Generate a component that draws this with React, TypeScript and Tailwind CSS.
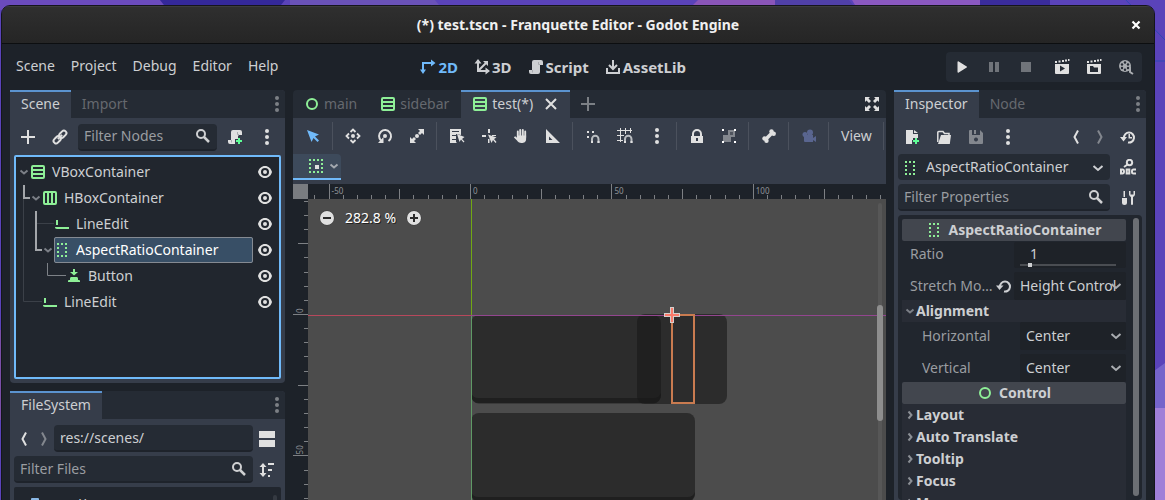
import React from "react";

const GREEN = "#8eef97";

interface IconProps {
  className?: string;
}

function Svg({ className = "", children }: { className?: string; children: React.ReactNode }) {
  return (
    <svg className={`w-4 h-4 shrink-0 ${className}`} viewBox="0 0 16 16" fill="currentColor" aria-hidden="true">
      {children}
    </svg>
  );
}

/* ---------- node icons ---------- */

function VBoxIcon() {
  return (
    <Svg>
      <path fill={GREEN} fillRule="evenodd" d="M3 1a2 2 0 0 0-2 2v10a2 2 0 0 0 2 2h10a2 2 0 0 0 2-2V3a2 2 0 0 0-2-2zm0 2h10v2H3zm0 4h10v2H3zm0 4h10v2H3z" />
    </Svg>
  );
}

function HBoxIcon() {
  return (
    <Svg>
      <path fill={GREEN} fillRule="evenodd" d="M3 1a2 2 0 0 0-2 2v10a2 2 0 0 0 2 2h10a2 2 0 0 0 2-2V3a2 2 0 0 0-2-2zm0 2h2v10H3zm4 0h2v10H7zm4 0h2v10h-2z" />
    </Svg>
  );
}

function LineEditIcon() {
  return (
    <Svg>
      <path fill={GREEN} d="M2 4v5h2V4zM1 11c0 1.200.5 2 2 2h12v-2z" />
    </Svg>
  );
}

function AspectRatioIcon() {
  return (
    <Svg>
      <path fill={GREEN} d="M3 1h2v2H3zm4 0h2v2H7zm4 0h2v2h-2zM3 5h2v2H3zm8 0h2v2h-2zM3 9h2v2H3zm8 0h2v2h-2zM3 13h2v2H3zm4 0h2v2H7zm4 0h2v2h-2z" />
    </Svg>
  );
}

function ButtonNodeIcon() {
  return (
    <Svg>
      <path fill={GREEN} d="M7 1h2v3h3L8 7.500 4 4h3zM5 9a2 2 0 0 0-1 1.500V12H3a1 1 0 0 0-1 1v1h12v-1a1 1 0 0 0-1-1h-1v-1.500A2 2 0 0 0 11 9z" />
    </Svg>
  );
}

function ControlIcon() {
  return (
    <Svg>
      <circle cx="8" cy="8" r="5" fill="none" stroke={GREEN} strokeWidth="2" />
    </Svg>
  );
}

function AnchorIcon() {
  return (
    <Svg>
      <path fill={GREEN} d="M1 1h2v2H1zm4 0h2v2H5zm4 0h2v2H9zm4 0h2v2h-2zM1 5h2v2H1zm12 0h2v2h-2zM1 9h2v2H1zm12 0h2v2h-2zM1 13h2v2H1zm4 0h2v2H5zm4 0h2v2H9zm4 0h2v2h-2z" />
      <path d="M7 7h4v4H7z" />
    </Svg>
  );
}

/* ---------- editor icons ---------- */

function ChevronDown({ className = "" }: IconProps) {
  return (
    <svg className={`w-3 h-3 shrink-0 ${className}`} viewBox="0 0 12 12" aria-hidden="true">
      <path d="m2.500 4.500 3.500 3 3.500-3" fill="none" stroke="currentColor" strokeWidth="2" />
    </svg>
  );
}

function ChevronRight({ className = "" }: IconProps) {
  return (
    <svg className={`w-3 h-3 shrink-0 ${className}`} viewBox="0 0 12 12" aria-hidden="true">
      <path d="m4.500 2.500 3 3.500-3 3.500" fill="none" stroke="currentColor" strokeWidth="2" />
    </svg>
  );
}

function SelectArrow({ className = "" }: IconProps) {
  return <Svg className={className}><path d="m3.500 6 4.500 4 4.500-4" fill="none" stroke="currentColor" strokeWidth="2" /></Svg>;
}

function PlusIcon({ className = "" }: IconProps) {
  return <Svg className={className}><path d="M7 1h2v6h6v2H9v6H7V9H1V7h6z" /></Svg>;
}

function DotsIcon({ className = "" }: IconProps) {
  return (
    <Svg className={className}>
      <circle cx="8" cy="2" r="2" />
      <circle cx="8" cy="8" r="2" />
      <circle cx="8" cy="14" r="2" />
    </Svg>
  );
}

function LinkIcon() {
  return (
    <Svg>
      <g fill="none" stroke="currentColor" strokeWidth="2" transform="rotate(-45 8 8)">
        <rect x="0" y="5.500" width="8" height="5" rx="2.500" />
        <rect x="8" y="5.500" width="8" height="5" rx="2.500" />
        <path d="M5 8h6" />
      </g>
    </Svg>
  );
}

function SearchIcon({ className = "" }: IconProps) {
  return (
    <Svg className={className}>
      <circle cx="6" cy="6" r="4" fill="none" stroke="currentColor" strokeWidth="2" />
      <path d="m9 9 5 5" stroke="currentColor" strokeWidth="2.500" />
    </Svg>
  );
}

function ScriptIcon() {
  return (
    <Svg>
      <path d="M6 1a2 2 0 0 0-2 2v8H1v2a2 2 0 0 0 2 2h7a2 2 0 0 0 2-2V6h3V3a2 2 0 0 0-2-2z" />
      <path d="M10.500 3v2.500H12M4.500 11v2.500" fill="none" stroke="#a9abaf" />
    </Svg>
  );
}

function ScriptAddIcon() {
  return (
    <Svg>
      <path d="M6 1a2 2 0 0 0-2 2v8H1v2a2 2 0 0 0 2 2h5v-5h3V7l1-1h3V3a2 2 0 0 0-2-2z" />
      <path d="M10.500 3v2.500H12M4.500 11v2.500" fill="none" stroke="#a9abaf" />
      <path fill="#5fff97" d="M11 9h2v2h2v2h-2v2h-2v-2H9v-2h2z" />
    </Svg>
  );
}

function EyeIcon() {
  return (
    <Svg className="text-[#e0e0e0]">
      <path fillRule="evenodd" d="M8 2C4.500 2 2 4.500 1 8c1 3.500 3.500 6 7 6s6-2.500 7-6c-1-3.500-3.500-6-7-6zm0 2a4 4 0 0 1 0 8 4 4 0 0 1 0-8z" />
      <circle cx="8" cy="8" r="2" />
    </Svg>
  );
}

function BackIcon({ className = "" }: IconProps) {
  return <Svg className={className}><path d="M10 1.500 6.500 8l3.500 6.500" fill="none" stroke="currentColor" strokeWidth="2" /></Svg>;
}

function ForwardIcon({ className = "" }: IconProps) {
  return <Svg className={className}><path d="M6 1.500 9.500 8 6 14.500" fill="none" stroke="currentColor" strokeWidth="2" /></Svg>;
}

function Icon2D() {
  return (
    <Svg>
      <path d="M3 12V4h8" fill="none" stroke="currentColor" strokeWidth="2" />
      <path d="m11 .5 4.500 3.500-4.500 3.500zM0 10.500h6L3 15z" />
    </Svg>
  );
}

function Icon3D() {
  return (
    <Svg>
      <path d="M4 3v9h9M4 12l8-8" fill="none" stroke="currentColor" strokeWidth="2" />
      <path d="M4 0 .5 4.500h7zM9 2h5v5zM11.500 8.500v7L16 12z" />
    </Svg>
  );
}

function AssetLibIcon() {
  return (
    <Svg>
      <path d="M2 9v5h12V9M8 1v8M4 6l4 4 4-4" fill="none" stroke="currentColor" strokeWidth="2" />
    </Svg>
  );
}

function SlateIcon({ children }: { children: React.ReactNode }) {
  return (
    <Svg>
      <path d="M1 2h2v2H1zm3.500-.5h2v2h-2zM8 1h2v2H8zm3-.5h2v2h-2zM14 0h1.500v2H14z" />
      <path d="M1 5h14v9a1 1 0 0 1-1 1H2a1 1 0 0 1-1-1z" />
      {children}
    </Svg>
  );
}

function MovieIcon() {
  return (
    <Svg>
      <circle cx="7" cy="7" r="6" />
      <path d="M12 8v5l3 2" fill="none" stroke="currentColor" strokeWidth="2" />
      <g fill="#252b34">
        <circle cx="7" cy="3.500" r="1.200" />
        <circle cx="4" cy="5.500" r="1.200" />
        <circle cx="10" cy="5.500" r="1.200" />
        <circle cx="4" cy="9" r="1.200" />
        <circle cx="10" cy="9" r="1.200" />
        <circle cx="7" cy="10.700" r="1.200" />
      </g>
    </Svg>
  );
}

/* ---------- shared pieces ---------- */

interface ToolButtonProps {
  label: string;
  tone?: string;
  className?: string;
  children: React.ReactNode;
}

function ToolButton({ label, tone = "text-[#e0e0e0]", className = "", children }: ToolButtonProps) {
  return (
    <button type="button" aria-label={label} title={label} className={`w-8 h-7 shrink-0 flex items-center justify-center ${tone} ${className}`}>
      {children}
    </button>
  );
}

function Separator() {
  return <span className="w-px h-7 mr-1 ml-[3px] shrink-0 bg-[#4b515d]" />;
}

function DockTabs({ tabs }: { tabs: string[] }) {
  return (
    <div className="flex h-7 bg-[#252b34] rounded-t-sm" role="tablist">
      {tabs.map((tab, idx) => (
        <button
          key={tab}
          type="button"
          role="tab"
          aria-selected={idx === 0}
          className={idx === 0 ? "px-[11px] pb-0.5 bg-[#363d4a] border-t-2 border-[#5b93cf] text-[#cdcfd2]" : "px-[11px] text-[#65696f]"}
        >
          {tab}
        </button>
      ))}
      <button type="button" aria-label="Dock options" className="ml-auto w-4 flex items-center justify-center text-[#7c8085]">
        <DotsIcon />
      </button>
    </div>
  );
}

function SearchBox({ label }: { label: string }) {
  return (
    <label className="flex flex-1 min-w-0 items-center h-[27px] px-1.5 bg-[#252b34] border-b-2 border-[#1e232b] rounded-sm">
      <input type="text" aria-label={label} placeholder={label} className="flex-1 min-w-0 bg-transparent outline-none placeholder:text-[#9a9da1]" />
      <SearchIcon className="text-[#cfd0d2]" />
    </label>
  );
}

/* ---------- scene dock ---------- */

interface TreeNode {
  name: string;
  level: number;
  icon: React.ReactNode;
  open?: boolean;
  selected?: boolean;
}

const sceneTree: TreeNode[] = [
  { name: "VBoxContainer", level: 0, icon: <VBoxIcon />, open: true },
  { name: "HBoxContainer", level: 1, icon: <HBoxIcon />, open: true },
  { name: "LineEdit", level: 2, icon: <LineEditIcon /> },
  { name: "AspectRatioContainer", level: 2, icon: <AspectRatioIcon />, open: true, selected: true },
  { name: "Button", level: 3, icon: <ButtonNodeIcon /> },
  { name: "LineEdit", level: 1, icon: <LineEditIcon /> },
];

function SceneTree() {
  return (
    <ul className="relative h-56 mx-1 p-0.5 border-2 border-[#70bafa] bg-[#21262e] rounded-xs" role="tree">
      <svg className="absolute left-0 top-0 w-16 h-40" fill="none" aria-hidden="true">
        <path d="M7.500 41v103.500H26M21 66.500h17" stroke="#3b4048" />
        <path d="M31.500 106v12.500H50" stroke="#7d8187" />
        <path d="M8 28v13h6M20 54v39h6" stroke="#a3a6aa" strokeWidth="2" />
      </svg>
      {sceneTree.map((node, idx) => (
        <li key={idx} className="relative flex items-center h-[26px]" role="treeitem" aria-selected={!!node.selected}>
          <span className="shrink-0" style={{ width: node.level * 12 }} />
          <span className="w-3 shrink-0 text-[#7b7f86]">{node.open && <ChevronDown />}</span>
          <span
            className={
              node.selected
                ? "flex flex-1 items-center gap-1.5 h-[26px] bg-[#384f66] outline outline-[#858a92] -outline-offset-1 rounded-xs text-white"
                : "flex flex-1 items-center gap-1.5 h-[26px] text-[#cdcfd2]"
            }
          >
            {node.icon}
            {node.name}
          </span>
          <button type="button" aria-label="Toggle visibility" className="mx-1">
            <EyeIcon />
          </button>
        </li>
      ))}
    </ul>
  );
}

function SceneDock() {
  return (
    <section className="bg-[#363d4a] rounded-sm pb-1">
      <DockTabs tabs={["Scene", "Import"]} />
      <div className="flex items-center h-[37px] pt-px px-0.5">
        <ToolButton label="Add Child Node"><PlusIcon /></ToolButton>
        <ToolButton label="Instantiate Scene"><LinkIcon /></ToolButton>
        <div className="flex flex-1 min-w-0 mx-0.5"><SearchBox label="Filter Nodes" /></div>
        <ToolButton label="Attach Script"><ScriptAddIcon /></ToolButton>
        <ToolButton label="More"><DotsIcon /></ToolButton>
      </div>
      <SceneTree />
    </section>
  );
}

function FileSystemDock() {
  return (
    <section className="mt-2 bg-[#363d4a] rounded-sm">
      <DockTabs tabs={["FileSystem"]} />
      <div className="flex items-center px-1 mt-1.5 text-[#e0e0e0]">
        <button type="button" aria-label="Back" className="w-5"><BackIcon className="mx-auto" /></button>
        <button type="button" aria-label="Forward" className="w-5"><ForwardIcon className="mx-auto text-[#83878e]" /></button>
        <input type="text" aria-label="Path" defaultValue="res://scenes/" className="flex-1 min-w-0 h-[27px] px-1.5 bg-[#252b34] border-b-2 border-[#1e232b] rounded-sm outline-none text-[#cdcfd2]" />
        <button type="button" aria-label="Toggle split" className="w-7 flex justify-center">
          <Svg><path d="M0 0h16v7H0zM0 9h16v7H0z" /></Svg>
        </button>
      </div>
      <div className="flex items-center px-1 mt-1 text-[#e0e0e0]">
        <SearchBox label="Filter Files" />
        <button type="button" aria-label="Sort files" className="w-7 flex justify-center">
          <Svg>
            <path d="M3 3h2v10H3z" />
            <path d="M4 1 .5 5h7zM4 15 .5 11h7zM9 1h6v2H9zM9 7h4v2H9zM9 13h2v2H9z" />
          </Svg>
        </button>
      </div>
      <div className="flex mx-1 mt-1 p-1 pr-0.5 bg-[#21262e] rounded-xs">
        <div className="flex flex-1 items-center h-[26px] pl-3 gap-1.5 text-[#cdcfd2]">
          <Svg className="text-[#8ab8e6]"><path d="M2 2a1 1 0 0 0-1 1v10a1 1 0 0 0 1 1h12a1 1 0 0 0 1-1V6a1 1 0 0 0-1-1H9V3a1 1 0 0 0-1-1z" /></Svg>
          res://
        </div>
        <span className="w-1 mt-1 mr-0.5 rounded-sm bg-[#353a42]" />
      </div>
    </section>
  );
}

/* ---------- centre ---------- */

function CanvasToolbar() {
  return (
    <div className="bg-[#363d4a] h-[66px]">
      <div className="flex items-center h-9 pl-1 overflow-hidden">
        <ToolButton label="Select Mode" tone="text-[#70bafa]">
          <Svg><path d="m2 2 4.500 12 2-4 4 4 1.500-1.500-4-4 4-2z" /></Svg>
        </ToolButton>
        <Separator />
        <ToolButton label="Move Mode">
          <Svg>
            <circle cx="8" cy="8" r="2" />
            <path d="m5.500 4 2.500-2.500L10.500 4M5.500 12 8 14.500l2.500-2.500M4 5.500 1.500 8 4 10.500M12 5.500 14.500 8 12 10.500" fill="none" stroke="currentColor" strokeWidth="1.800" />
          </Svg>
        </ToolButton>
        <ToolButton label="Rotate Mode">
          <Svg>
            <path d="M4 12.500A6 6 0 1 1 11.500 13" fill="none" stroke="currentColor" strokeWidth="2" />
            <circle cx="8" cy="8" r="2" />
            <path d="M6.500 9v6H1z" />
          </Svg>
        </ToolButton>
        <ToolButton label="Scale Mode">
          <Svg>
            <circle cx="8" cy="8" r="2" />
            <path d="M9 1h6v6l-2-2-2 2-2-2 2-2zM7 15H1V9l2 2 2-2 2 2-2 2z" />
          </Svg>
        </ToolButton>
        <Separator />
        <ToolButton label="Show list of selectable nodes">
          <Svg>
            <path fillRule="evenodd" d="M1 1h11v6L7 6v8l1 1H1zm2 2v1h7V3zm0 4v1h4V7zm0 4v1h4v-1z" />
            <path d="m8 6 2.500 8 1.500-2.500 2.500 3 1-1-2.500-2.500L15.500 9z" />
          </Svg>
        </ToolButton>
        <ToolButton label="Change pivot">
          <Svg>
            <path d="M7 1h2v4H7zM1 7h4v2H1zM11 7h4v1h-4zM7 11h1.500v4H7z" />
            <path d="m7 6.500 3.500 8.500 1.500-3 2.500 3 1-1-2.500-3 2.500-1.500z" />
          </Svg>
        </ToolButton>
        <ToolButton label="Pan Mode">
          <Svg>
            <path d="M4.800 3.500v5M7.200 2v6M9.800 2v6M12.200 3.500v6" stroke="currentColor" strokeWidth="1.900" strokeLinecap="round" />
            <path d="M3.900 7.500h9.200V11c0 3-2 4-4.500 4C6 15 5 14 4 12.500L1 9.500c.3-1.200 1.500-1.200 2-.8l1 1z" />
          </Svg>
        </ToolButton>
        <ToolButton label="Ruler Mode">
          <Svg><path fillRule="evenodd" d="M1 1v14h14zm3 7.500 3.500 3.500H4z" /></Svg>
        </ToolButton>
        <Separator />
        <ToolButton label="Smart snap">
          <Svg>
            <path d="M2 3h2v2H2zM2 8h2v2H2zM7 3h2v2H7z" />
            <path d="M7 15v-4a3 3 0 0 1 6.500 0v4" fill="none" stroke="#b9bcc0" strokeWidth="2" />
            <path d="M6 13h2v2H6zM12.500 13h2v2h-2z" />
          </Svg>
        </ToolButton>
        <ToolButton label="Grid snap">
          <Svg>
            <path d="M3 0h1v14H3zM8 0h1v6H8zM13 0h1v5h-1zM0 2h15v1H0zM0 7h7v1H0zM0 12h6v1H0z" />
            <path d="M8 15v-4a3 3 0 0 1 6.500 0v4" fill="none" stroke="#b9bcc0" strokeWidth="2" />
            <path d="M7 13h2v2H7zM13.500 13h2v2h-2z" />
          </Svg>
        </ToolButton>
        <ToolButton label="Snapping options"><DotsIcon /></ToolButton>
        <Separator />
        <ToolButton label="Lock">
          <Svg>
            <path fillRule="evenodd" d="M2 8h12v7H2zm5 2v3h2v-3z" />
            <path d="M4 8V6a4 4 0 0 1 8 0v2" fill="none" stroke="currentColor" strokeWidth="2" />
          </Svg>
        </ToolButton>
        <ToolButton label="Group">
          <Svg>
            <path d="M7 2h7v7h-4v5H2V7h5z" fill="#83878e" />
            <path d="M9 4h3v3H9z" fill="#50555f" />
            <path d="M1 1h2v2H1zM13 1h2v2h-2zM1 13h2v2H1zM13 13h2v2h-2z" fill="#fff" />
          </Svg>
        </ToolButton>
        <Separator />
        <ToolButton label="Skeleton options">
          <Svg>
            <path d="M5 11 11 5" stroke="currentColor" strokeWidth="3.500" />
            <circle cx="10.500" cy="3.500" r="2.200" />
            <circle cx="12.700" cy="5.700" r="2.200" />
            <circle cx="3.500" cy="10.500" r="2.200" />
            <circle cx="5.500" cy="12.700" r="2.200" />
          </Svg>
        </ToolButton>
        <Separator />
        <ToolButton label="Override camera" tone="text-[#59658f]">
          <Svg>
            <circle cx="9" cy="4.500" r="3" />
            <circle cx="4" cy="6.500" r="2.500" />
            <path d="M3 7h9v3l3-2v6l-3-2v2H4a1 1 0 0 1-1-1z" />
          </Svg>
        </ToolButton>
        <Separator />
        <button type="button" className="px-2 text-[#cdcfd2]">View</button>
        <span className="w-px h-7 ml-[3px] shrink-0 bg-[#4b515d]" />
      </div>
      <button type="button" aria-label="Anchor preset" className="flex items-center justify-end gap-1 w-12 h-[26px] pr-px bg-[#3d4a5b] border-b-2 border-[#70bafa] rounded-tr-sm text-[#e0e0e0]">
        <AnchorIcon />
        <ChevronDown className="text-[#a3a8af]" />
      </button>
    </div>
  );
}

const UNIT = 14.14;
const ORIGIN = { x: 178, y: 131 };

function Canvas2D() {
  const ticksX = Array.from({ length: 42 }, (_, i) => i - 11);
  const ticksY = Array.from({ length: 22 }, (_, i) => i - 8);
  const len = (n: number) => (n % 10 === 0 ? 15 : n % 5 === 0 ? 10 : 4);

  return (
    <div className="relative flex-1 min-h-0 bg-[#1d2229] overflow-hidden">
      <svg className="block w-full h-full" shapeRendering="crispEdges">
        <rect x="15" y="15" width="100%" height="100%" fill="#4c4c4c" />
        <g shapeRendering="auto">
          <rect x="178" y="131" width="190" height="88" rx="8" fill="#191919" fillOpacity=".61" />
          <path d="M178 209a8 8 0 0 0 8 5h174a8 8 0 0 0 8-5v2a8 8 0 0 1-8 8.500H186a8 8 0 0 1-8-8.500z" fill="#191919" fillOpacity=".7" />
          <rect x="344" y="130" width="90" height="90" rx="8" fill="#191919" fillOpacity=".61" />
          <rect x="178" y="229" width="224" height="88" rx="8" fill="#191919" fillOpacity=".61" />
          <path d="M178 308a8 8 0 0 0 8 5h208a8 8 0 0 0 8-5v2a8 8 0 0 1-8 8H186a8 8 0 0 1-8-8z" fill="#191919" fillOpacity=".7" />
        </g>
        <path d="M15 131.500h163" stroke="#b7485c" />
        <path d="M178 131.500h2000" stroke="#93468f" />
        <path d="M178.500 15v116" stroke="#71a813" />
        <path d="M178.500 132v2000" stroke="#5f9966" />
        <rect x="379" y="131" width="22" height="88" fill="none" stroke="#c97b50" strokeWidth="2" />
        <path d="M377 123h4v6h6v4h-6v6h-4v-6h-6v-4h6z" fill="#d5cfcc" />
        <path d="M378 124h2v14h-2zM372 130h14v2h-14z" fill="#fa7b6b" />
        <rect width="15" height="15" fill="#797c80" />
        <g stroke="#7d8084">
          {ticksX.map((n) => {
            const x = Math.floor(177.500 + n * UNIT) + 0.5;
            return x > 15 && <path key={n} d={`M${x} ${15 - len(n)}V15`} />;
          })}
          {ticksY.map((n) => {
            const y = Math.floor(130.500 + n * UNIT) + 0.5;
            return y > 15 && <path key={n} d={`M${15 - len(n)} ${y}H15`} />;
          })}
        </g>
        <g fill="#909398" fontSize="8" shapeRendering="auto">
          {[-50, 0, 50, 100].map((v) => (
            <text key={v} x={ORIGIN.x + 2 + (v / 5) * UNIT} y="10">{v}</text>
          ))}
          {[0, 50].map((v) => (
            <text key={v} transform={`translate(10 ${ORIGIN.y - 2 + (v / 5) * UNIT}) rotate(-90)`}>{v}</text>
          ))}
        </g>
      </svg>

      <div className="absolute left-[26px] top-[25px] flex items-center gap-2.5 leading-[18px] text-white">
        <button type="button" aria-label="Zoom out">
          <Svg className="text-[#e0e0e0]">
            <circle cx="8" cy="8" r="7.500" fill="#3a3a3a" />
            <circle cx="8" cy="8" r="7" />
            <path d="M4 7h8v2H4z" fill="#2b2b2b" />
          </Svg>
        </button>
        <button type="button" className="[text-shadow:1px_1px_0_#222]">282.8 %</button>
        <button type="button" aria-label="Zoom in">
          <Svg className="text-[#e0e0e0]">
            <circle cx="8" cy="8" r="7.500" fill="#3a3a3a" />
            <circle cx="8" cy="8" r="7" />
            <path d="M4 7h3V4h2v3h3v2H9v3H7V9H4z" fill="#2b2b2b" />
          </Svg>
        </button>
      </div>

      <div className="absolute right-[3px] top-[19px] bottom-0 w-1.5">
        <div className="mx-px h-full bg-[#575757] rounded-t-sm" />
        <div className="absolute left-0 top-[102px] w-1.5 h-[116px] rounded-sm bg-[#8e8e8e]" />
      </div>
    </div>
  );
}

function Workspace() {
  return (
    <main className="flex flex-col flex-1 min-w-0">
      <div className="flex h-7 shrink-0 bg-[#252b34] rounded-t-sm" role="tablist">
        <button type="button" role="tab" className="flex items-center gap-1 pl-[11px] pr-3 text-[#65696f]"><ControlIcon />main</button>
        <button type="button" role="tab" className="flex items-center gap-1 pl-[11px] pr-3 text-[#65696f]"><VBoxIcon />sidebar</button>
        <div className="flex items-center px-[11px] pb-0.5 bg-[#363d4a] border-t-2 border-[#5b93cf]">
          <button type="button" role="tab" aria-selected="true" className="flex items-center gap-1 text-[#cdcfd2]"><VBoxIcon />test(*)</button>
          <button type="button" aria-label="Close tab" className="ml-2.5 text-[#e0e0e0]">
            <Svg><path d="m3 3 10 10M13 3 3 13" stroke="currentColor" strokeWidth="2" /></Svg>
          </button>
        </div>
        <button type="button" aria-label="New scene" className="ml-2.5 text-[#7c8085]"><PlusIcon /></button>
        <button type="button" aria-label="Distraction free" className="ml-auto mr-1.5 text-[#e0e0e0]">
          <Svg><path d="M1 1h5L4.500 2.500 7 5 5 7 2.500 4.500 1 6zM15 1h-5l1.500 1.500L9 5l2 2 2.500-2.500L15 6zM1 15h5l-1.500-1.500L7 11 5 9l-2.500 2.500L1 10zM15 15h-5l1.500-1.500L9 11l2-2 2.500 2.500L15 10z" /></Svg>
        </button>
      </div>
      <CanvasToolbar />
      <Canvas2D />
    </main>
  );
}

/* ---------- inspector ---------- */

function CategoryHeader({ icon, title }: { icon: React.ReactNode; title: string }) {
  return (
    <h3 className="flex items-center justify-center gap-1.5 h-[22px] bg-[#42464e] rounded-xs font-bold">
      {icon}
      {title}
    </h3>
  );
}

function FoldHeader({ title, open = false }: { title: string; open?: boolean }) {
  return (
    <button type="button" className="flex items-center w-full h-[22px] pl-0.5 bg-[#282c35] font-bold" aria-expanded={open}>
      {open ? <ChevronDown className="text-[#7b7f86]" /> : <ChevronRight className="text-[#8b8f95]" />}
      {title}
    </button>
  );
}

function SelectField({ id, options, className }: { id: string; options: string[]; className: string }) {
  return (
    <div className={`relative h-7 bg-[#1e2228] rounded-xs ${className}`}>
      <select id={id} className="appearance-none w-full h-7 pl-1.5 pr-2.5 bg-transparent outline-none">
        {options.map((opt) => <option key={opt}>{opt}</option>)}
      </select>
      <SelectArrow className="absolute right-0.5 top-1.5 text-[#a9acb0] pointer-events-none" />
    </div>
  );
}

const collapsedSections = ["Layout", "Auto Translate", "Tooltip", "Focus", "Mouse"];

function Inspector() {
  return (
    <aside className="flex flex-col w-[252px] shrink-0 bg-[#363d4a] rounded-t-sm">
      <DockTabs tabs={["Inspector", "Node"]} />
      <div className="flex items-center h-9 px-0.5 pt-0.5 shrink-0">
        <ToolButton label="New Resource">
          <Svg>
            <path d="M2 1h7v4h5v4H9v2H8v4H2zM10 1l4 3h-4z" />
            <path fill="#5fff97" d="M11 9h2v2h2v2h-2v2h-2v-2H9v-2h2z" />
          </Svg>
        </ToolButton>
        <ToolButton label="Load Resource">
          <Svg>
            <path d="M1.800 13V3.500a1 1 0 0 1 1-1H7l1.500 2H13V6" fill="none" stroke="currentColor" strokeWidth="1.500" />
            <path d="M5 6h10l-1.200 9H2z" />
          </Svg>
        </ToolButton>
        <ToolButton label="Save Resource" tone="text-[#83878e]">
          <Svg>
            <path fillRule="evenodd" d="M1 2a1 1 0 0 1 1-1h2v5h8V1l3 3v10a1 1 0 0 1-1 1H2a1 1 0 0 1-1-1zm7 6.500a2 2 0 1 0 .01 0zM6 1h2v4H6z" />
          </Svg>
        </ToolButton>
        <ToolButton label="Resource options"><DotsIcon /></ToolButton>
        <button type="button" aria-label="Previous object" className="ml-auto w-6 text-[#e0e0e0]"><BackIcon className="mx-auto" /></button>
        <button type="button" aria-label="Next object" className="w-6"><ForwardIcon className="mx-auto text-[#83878e]" /></button>
        <ToolButton label="History">
          <Svg>
            <path d="M4 9a5 5 0 1 1 4 4.500" fill="none" stroke="currentColor" strokeWidth="2" />
            <path d="M0 8h7l-3.500 4.500zM8.500 5H10v3h2v1.500H8.500z" />
          </Svg>
        </ToolButton>
      </div>
      <div className="flex items-center pl-1 shrink-0">
        <div className="relative flex-1 bg-[#252b34] rounded-sm">
          <span className="absolute left-1 top-1.5"><AspectRatioIcon /></span>
          <select aria-label="Edited object" className="appearance-none w-full h-[26px] pl-7 bg-transparent outline-none">
            <option>AspectRatioContainer</option>
          </select>
          <SelectArrow className="absolute right-1 top-1.5 text-[#cdcfd2] pointer-events-none" />
        </div>
        <button type="button" aria-label="Open documentation" className="w-9 flex justify-center text-[#e0e0e0]">
          <Svg>
            <circle cx="9.500" cy="3.500" r="2.700" fill="none" stroke="currentColor" strokeWidth="2" />
            <path d="m7.500 5.500-3.500 2.500" stroke="currentColor" strokeWidth="2" />
            <path d="M1 10.500h1.300c1.300 0 1.700.9 1.700 2s-.4 2-1.700 2H1zM6.700 10.500h2.600v4H6.700zM16 10.500h-2.500a1.500 1.500 0 0 0-1.500 1.500v1a1.500 1.500 0 0 0 1.500 1.500H16" fill="none" stroke="currentColor" strokeWidth="2" />
          </Svg>
        </button>
      </div>
      <div className="flex items-center pl-1 mt-1 shrink-0">
        <SearchBox label="Filter Properties" />
        <button type="button" aria-label="Manage properties" className="w-9 flex justify-center text-[#e0e0e0]">
          <Svg>
            <path d="M3.500 1h1.500v6H3.500zM2 8h5v4.500a2.500 2.500 0 0 1-5 0z" />
            <path d="M9 1v3.500a3 3 0 0 0 2 2.500V14a1 1 0 0 0 2 0V7a3 3 0 0 0 2-2.500V1h-1.500v3.500h-3V1z" />
          </Svg>
        </button>
      </div>

      <div className="flex flex-1 min-h-0 mt-1 mx-1 p-1 pr-[3px] bg-[#21262e] rounded-sm overflow-hidden">
        <div className="flex-1 min-w-0">
          <CategoryHeader icon={<AspectRatioIcon />} title="AspectRatioContainer" />
          <div className="flex mt-px">
            <label htmlFor="ratio" className="w-28 pl-2 leading-6 text-[#9a9da1]">Ratio</label>
            <div className="flex-1 h-[26px] pl-1.5 pr-2.5 bg-[#1e2228] rounded-xs">
              <input id="ratio" type="text" defaultValue="1" className="block w-full h-[21px] pt-0.5 pl-2.5 bg-transparent outline-none" />
              <input
                type="range"
                aria-label="Ratio slider"
                defaultValue={9}
                className="block w-full h-1 appearance-none bg-transparent [&::-webkit-slider-runnable-track]:h-0.5 [&::-webkit-slider-runnable-track]:bg-[#4a4d52] [&::-webkit-slider-thumb]:appearance-none [&::-webkit-slider-thumb]:size-1 [&::-webkit-slider-thumb]:-mt-px [&::-webkit-slider-thumb]:bg-[#cdcfd2]"
              />
            </div>
          </div>
          <div className="flex items-center mt-1">
            <label htmlFor="stretch" className="w-[92px] pl-2 truncate text-[#9a9da1]">Stretch Mode</label>
            <button type="button" aria-label="Revert value" className="w-5 text-[#cdcfd2]">
              <Svg className="mx-auto">
                <path d="M4 9a5 5 0 1 1 4 4.500" fill="none" stroke="currentColor" strokeWidth="2" />
                <path d="M0 7.500h7.500L3.500 12z" />
              </Svg>
            </button>
            <SelectField id="stretch" className="flex-1 min-w-0" options={["Height Controls Width", "Width Controls Height", "Fit", "Cover"]} />
          </div>
          <FoldHeader title="Alignment" open />
          <div className="flex items-center">
            <label htmlFor="horizontal" className="w-[118px] pl-5 text-[#9a9da1]">Horizontal</label>
            <SelectField id="horizontal" className="flex-1 min-w-0" options={["Center", "Begin", "End"]} />
          </div>
          <div className="flex items-center mt-1">
            <label htmlFor="vertical" className="w-[118px] pl-5 text-[#9a9da1]">Vertical</label>
            <SelectField id="vertical" className="flex-1 min-w-0" options={["Center", "Begin", "End"]} />
          </div>
          <CategoryHeader icon={<ControlIcon />} title="Control" />
          {collapsedSections.map((title) => <FoldHeader key={title} title={title} />)}
        </div>
        <span className="w-1.5 ml-[7px] -mt-px rounded-sm bg-[#6c6f74]" />
      </div>
    </aside>
  );
}

/* ---------- window ---------- */

const screens = [
  { name: "2D", icon: <Icon2D /> },
  { name: "3D", icon: <Icon3D /> },
  { name: "Script", icon: <ScriptIcon /> },
  { name: "AssetLib", icon: <AssetLibIcon /> },
];

function TopBar() {
  return (
    <header className="flex items-center h-[46px] pl-1.5 pr-3 shrink-0">
      <nav className="flex pb-0.5">
        {["Scene", "Project", "Debug", "Editor", "Help"].map((item) => (
          <button key={item} type="button" className="px-2">{item}</button>
        ))}
      </nav>
      <span className="grow" />
      <nav className="flex text-[15px] font-bold">
        {screens.map((screen) => (
          <button
            key={screen.name}
            type="button"
            className={screen.name === "2D" ? "flex items-center gap-0.5 px-2 text-[#70bafa]" : "flex items-center gap-0.5 px-2 text-[#cdcfd2]"}
          >
            {screen.icon}
            {screen.name}
          </button>
        ))}
      </nav>
      <span className="grow-2" />
      <div className="flex items-center h-[30px] bg-[#252b34] rounded-sm">
        <ToolButton label="Run Project"><Svg><path d="M3.500 3v10a.8.800 0 0 0 1.200.5l8-5a.6.600 0 0 0 0-1l-8-5a.8.800 0 0 0-1.200.5z" /></Svg></ToolButton>
        <ToolButton label="Pause" tone="text-[#70747a]"><Svg><path d="M3 3h4v10H3zM9 3h4v10H9z" /></Svg></ToolButton>
        <ToolButton label="Stop" tone="text-[#70747a]"><Svg><path d="M3 3h10v10H3z" /></Svg></ToolButton>
        <ToolButton label="Run Current Scene" className="ml-1"><SlateIcon><path d="M6 6.500v6l5-3z" fill="#252b34" /></SlateIcon></ToolButton>
        <ToolButton label="Run Specific Scene"><SlateIcon><path d="M4 7h3l1 1.500h4v4.500H4z" fill="#252b34" /></SlateIcon></ToolButton>
        <ToolButton label="Movie Maker" tone="text-[#a8abaf]"><MovieIcon /></ToolButton>
      </div>
    </header>
  );
}

function Wallpaper() {
  return (
    <svg className="absolute inset-0 w-full h-full -z-10" viewBox="0 0 1165 500" preserveAspectRatio="none" aria-hidden="true">
      <path fill="#5a43ba" d="M0 0h1165v500H0z" />
      <path fill="#6b4bbd" d="M0 0h160l8 10H0z" />
      <path fill="#34289a" d="M160 0h125l-8 10H168z" />
      <path fill="#6a52b8" d="M290 0h145l8 10H290z" />
      <path fill="#8a55b8" d="M698 0h77v10h-87z" />
      <path fill="#5040a8" d="M775 0h74l8 10h-82z" />
      <path fill="#8a58c0" d="M852 0h128v10H858z" />
      <path fill="#3a2c9c" d="M980 0h70v10h-70z" />
      <path stroke="#2f48b4" fill="none" d="m1122-4 43 44M1154 61h11" />
      <path fill="#7564cb" d="m1154 371 11-8v45h-11z" />
      <path fill="#a07fd8" d="M1154 408h11v92h-11z" />
      <path fill="#7a4fa8" d="M0 330h2v90H0z" />
    </svg>
  );
}

export default function App() {
  return (
    <div className="relative z-0 h-screen pt-1.5 pl-0.5 pr-[11px] overflow-hidden font-['Noto_Sans',sans-serif] text-sm leading-5 text-[#cdcfd2]">
      <Wallpaper />
      <div className="flex flex-col h-full bg-[#1d2229] rounded-t-lg overflow-hidden outline outline-[#15151c]">
        <div className="relative flex items-center justify-center h-[38px] shrink-0 bg-linear-to-b from-[#2f2f2f] to-[#252525] border-t border-t-[#3c3c3c] border-b border-b-[#0c0e10]">
          <h1 className="text-sm font-bold text-[#f0f0f0]">(*) test.tscn - Franquette Editor - Godot Engine</h1>
          <button type="button" aria-label="Close window" className="absolute right-2.5 text-white">
            <Svg><path d="m4.500 4.500 7 7M11.500 4.500l-7 7" stroke="currentColor" strokeWidth="2.200" /></Svg>
          </button>
        </div>
        <TopBar />
        <div className="flex flex-1 min-h-0 gap-2 px-2">
          <div className="w-[275px] shrink-0">
            <SceneDock />
            <FileSystemDock />
          </div>
          <Workspace />
          <Inspector />
        </div>
      </div>
    </div>
  );
}
